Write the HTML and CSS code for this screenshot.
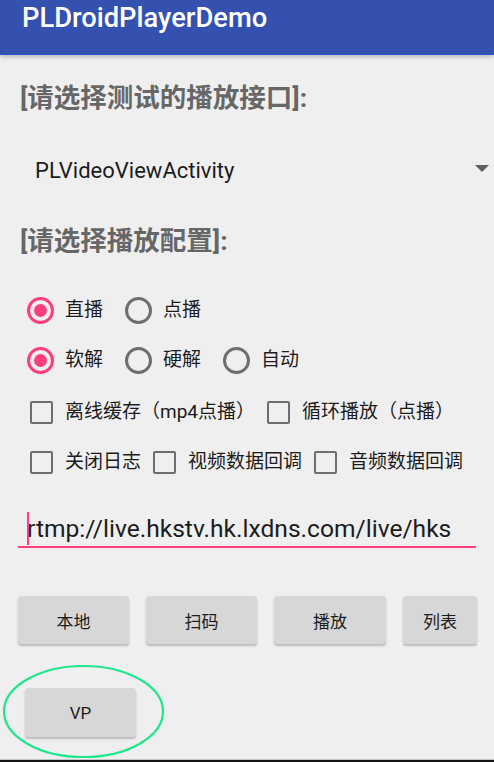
FILE: index.html
```html
<!DOCTYPE html>
<html lang="zh-CN">
<head>
<meta charset="utf-8">
<title>PLDroidPlayerDemo</title>
<link rel="stylesheet" href="styles.css">
</head>
<body>
<div class="screen">
  <header class="appbar">
    <h1 class="title">PLDroidPlayerDemo</h1>
  </header>
  <main class="content">
    <h2 class="section-title">[请选择测试的播放接口]:</h2>
    <div class="spinner">
      <span class="spinner-text">PLVideoViewActivity</span>
      <span class="spinner-arrow"></span>
    </div>
    <h2 class="section-title section-title-2">[请选择播放配置]:</h2>

    <div class="radio-group">
      <div class="row radio-row">
        <label class="radio-item"><span class="radio on"></span><span class="opt-text">直播</span></label>
        <label class="radio-item"><span class="radio"></span><span class="opt-text">点播</span></label>
      </div>
      <div class="row radio-row">
        <label class="radio-item"><span class="radio on"></span><span class="opt-text">软解</span></label>
        <label class="radio-item"><span class="radio"></span><span class="opt-text">硬解</span></label>
        <label class="radio-item"><span class="radio"></span><span class="opt-text">自动</span></label>
      </div>
    </div>

    <div class="check-group">
      <div class="row check-row">
        <label class="check-item"><span class="checkbox"></span><span class="opt-text">离线缓存（mp4点播）</span></label>
        <label class="check-item"><span class="checkbox"></span><span class="opt-text">循环播放（点播）</span></label>
      </div>
      <div class="row check-row">
        <label class="check-item"><span class="checkbox"></span><span class="opt-text">关闭日志</span></label>
        <label class="check-item"><span class="checkbox"></span><span class="opt-text">视频数据回调</span></label>
        <label class="check-item"><span class="checkbox"></span><span class="opt-text">音频数据回调</span></label>
      </div>
    </div>

    <div class="edit">
      <span class="cursor"></span>
      <span class="edit-text">rtmp://live.hkstv.hk.lxdns.com/live/hks</span>
    </div>

    <div class="buttons">
      <button class="btn">本地</button>
      <button class="btn">扫码</button>
      <button class="btn btn-wide">播放</button>
      <button class="btn btn-narrow">列表</button>
    </div>

    <div class="vp-row">
      <button class="btn">VP</button>
      <svg class="highlight" width="164" height="96" viewBox="0 0 164 96" aria-hidden="true">
        <ellipse cx="81.5" cy="47.5" rx="79.5" ry="45.5" fill="none" stroke="#1ee68a" stroke-width="2.2"/>
      </svg>
    </div>
  </main>
</div>
</body>
</html>
```
FILE: styles.css
```css
* { box-sizing: border-box; }

html, body {
  margin: 0;
  padding: 0;
  background: #efefef;
}

body {
  font-family: Roboto, "Noto Sans CJK SC", sans-serif;
  color: #1c1c1c;
}

.screen {
  width: 494px;
  height: 762px;
  overflow: hidden;
  background: #efefef;
  border-bottom: 2px solid #151515;
  box-shadow: inset 0 -1px 0 #c4c4c4;
}

.appbar {
  height: 55px;
  background: #3451b0;
  border-bottom: 1px solid #2c56cf;
  box-shadow: 0 2px 4px rgba(0, 0, 0, 0.22);
  padding: 2px 0 0 22px;
  position: relative;
  z-index: 1;
}

.title {
  margin: 0;
  font-family: Roboto, "Noto Sans CJK SC", sans-serif;
  font-weight: 500;
  font-size: 27.3px;
  line-height: 32px;
  color: #ffffff;
}

.content {
  padding: 0 20px;
}

.section-title {
  margin: 28px 0 0 0;
  font-size: 26.5px;
  line-height: 30px;
  font-weight: 700;
  color: #676767;
}

.section-title-2 {
  margin-top: 32px;
}

.spinner {
  margin: 33px -15px 0 0;
  height: 48px;
  display: flex;
  align-items: center;
  justify-content: space-between;
  padding-left: 15px;
}

.spinner-text {
  font-size: 22px;
  line-height: 48px;
  color: #1c1c1c;
  position: relative;
  top: 1px;
}

.spinner-arrow {
  width: 0;
  height: 0;
  border-left: 7px solid transparent;
  border-right: 7px solid transparent;
  border-top: 7px solid #5e5e5e;
  margin-top: -3px;
}

.radio-group {
  margin-top: 29px;
}

.row {
  height: 50px;
  display: flex;
  align-items: center;
}

.radio-row {
  padding-left: 7px;
}

.radio-item {
  display: flex;
  align-items: center;
  margin-right: 22px;
}

.radio {
  width: 27px;
  height: 27px;
  border-radius: 50%;
  border: 3px solid #6e6e6e;
  margin-right: 11px;
  display: flex;
  align-items: center;
  justify-content: center;
  flex: none;
}

.radio.on {
  border-color: #ff3d7c;
}

.radio.on::after {
  content: "";
  width: 13px;
  height: 13px;
  border-radius: 50%;
  background: #ff3d7c;
}

.opt-text {
  font-size: 19px;
  line-height: 26px;
  color: #1c1c1c;
  white-space: nowrap;
}

.check-group {
  margin-top: 2px;
}

.check-row {
  padding-left: 10px;
}

.check-item {
  display: flex;
  align-items: center;
  margin-right: 12px;
}

.checkbox {
  width: 23px;
  height: 23px;
  border: 2.5px solid #6e6e6e;
  border-radius: 2px;
  margin-right: 12px;
  flex: none;
}

.edit {
  position: relative;
  margin: 13px -2px 0 -2px;
  height: 48px;
  padding: 14px 0 2px 9px;
  border-bottom: 2px solid #ff3d7c;
}

.edit-text {
  font-size: 24.6px;
  line-height: 30px;
  color: #1c1c1c;
  white-space: nowrap;
}

.cursor {
  position: absolute;
  left: 9px;
  top: 12px;
  width: 2px;
  height: 33px;
  background: #ff3d7c;
}

.buttons {
  margin: 48px -3px 0 -2px;
  display: flex;
  gap: 17px;
}

.btn {
  width: 111px;
  height: 48px;
  border: none;
  border-radius: 3px;
  background: #d7d7d7;
  box-shadow: 0 2px 2px rgba(0, 0, 0, 0.22);
  font-family: Roboto, "Noto Sans CJK SC", sans-serif;
  font-size: 17px;
  color: #1c1c1c;
  padding: 0;
}

.btn-wide {
  width: 112px;
}

.btn-narrow {
  width: 74px;
}

.vp-row {
  position: relative;
  margin-top: 44px;
  padding-left: 5px;
}

.vp-row .btn {
  height: 49px;
}

.highlight {
  position: absolute;
  left: -18px;
  top: -24px;
}
```
